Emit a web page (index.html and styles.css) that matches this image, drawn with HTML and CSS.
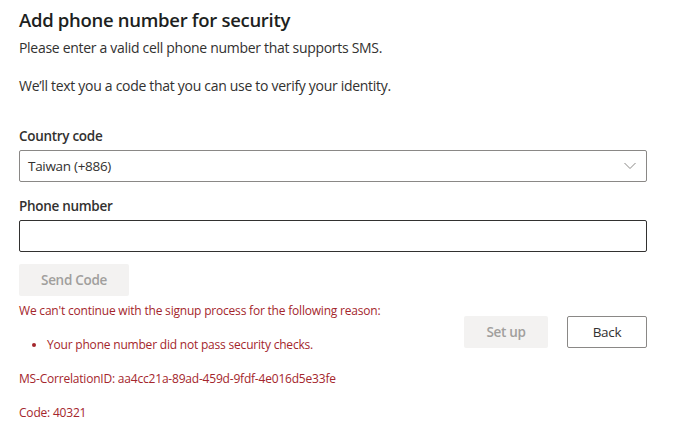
FILE: index.html
```html
<!DOCTYPE html>
<html lang="en">
<head>
  <meta charset="UTF-8" />
  <title>Add phone number for security</title>
  <link rel="stylesheet" href="styles.css">
</head>
<body>
  <div class="container">
    <h1 class="title">Add phone number for security</h1>
    <p class="intro">Please enter a valid cell phone number that supports SMS.</p>
    <p class="intro second">We’ll text you a code that you can use to verify your identity.</p>

    <div class="field country">
      <label class="label">Country code</label>
      <div class="select">
        <span>Taiwan (+886)</span>
        <svg class="chevron" width="12" height="8" viewBox="0 0 12 8">
          <path d="M0.5 1 L6 6.5 L11.5 1" fill="none" stroke="#8a8886" stroke-width="1"/>
        </svg>
      </div>
    </div>

    <div class="field">
      <label class="label">Phone number</label>
      <div class="input"></div>
    </div>

    <button class="btn disabled send">Send Code</button>

    <div class="bottom">
      <div class="error">
        <p>We can't continue with the signup process for the following reason:</p>
        <ul>
          <li>Your phone number did not pass security checks.</li>
        </ul>
        <p>MS-CorrelationID: aa4cc21a-89ad-459d-9fdf-4e016d5e33fe</p>
        <p>Code: 40321</p>
      </div>
      <div class="actions">
        <button class="btn disabled setup">Set up</button>
        <button class="btn back">Back</button>
      </div>
    </div>
  </div>
</body>
</html>
```

FILE: styles.css
```css
body {
  font-family: "Open Sans", "Noto Sans", sans-serif;
  color: #323130;
  background-color: white;
  margin: 0;
  padding: 0 19px;
}

.container {
  width: 628px;
}

.title {
  font-size: 18.5px;
  font-weight: 600;
  letter-spacing: -0.3px;
  margin: 7px 0 0;
  line-height: 26px;
  color: #201f1e;
}

.intro {
  font-size: 14px;
  letter-spacing: -0.3px;
  margin: 6px 0 0;
  line-height: 18px;
}

.intro.second {
  margin-top: 20px;
}

.field {
  margin-top: 14px;
}

.field.country {
  margin-top: 31px;
}

.label {
  display: block;
  font-size: 13.5px;
  font-weight: 600;
  letter-spacing: -0.3px;
  line-height: 20px;
  margin-bottom: 4px;
}

.select {
  height: 32px;
  box-sizing: border-box;
  border: 1px solid #8a8886;
  border-radius: 2px;
  display: flex;
  align-items: center;
  justify-content: space-between;
  padding: 0 10px 0 8px;
  font-size: 13.5px;
  letter-spacing: -0.3px;
}

.input {
  height: 32px;
  box-sizing: border-box;
  border: 1px solid #323130;
  border-radius: 2px;
}

.btn {
  font-family: inherit;
  font-size: 13.5px;
  font-weight: 600;
  letter-spacing: -0.3px;
  height: 32px;
  border-radius: 2px;
  box-sizing: border-box;
  padding: 0;
  cursor: pointer;
}

.btn.disabled {
  background-color: #f3f2f1;
  color: #a19f9d;
  border: none;
}

.send {
  display: block;
  width: 110px;
  margin-top: 12px;
}

.bottom {
  display: flex;
  justify-content: space-between;
  align-items: flex-start;
}

.error {
  color: #a4262c;
  font-size: 12px;
  letter-spacing: -0.2px;
  line-height: 16px;
}

.error p {
  margin: 7px 0 0;
}

.error ul {
  margin: 18px 0 0;
  padding-left: 28px;
}

.error ul + p {
  margin-top: 18px;
}

.error p:last-child {
  margin-top: 18px;
}

.actions {
  display: flex;
  gap: 19px;
  margin-top: 20px;
}

.setup {
  width: 84px;
}

.back {
  width: 80px;
  background-color: white;
  border: 1px solid #8a8886;
  color: #323130;
  font-weight: 400;
}
```
